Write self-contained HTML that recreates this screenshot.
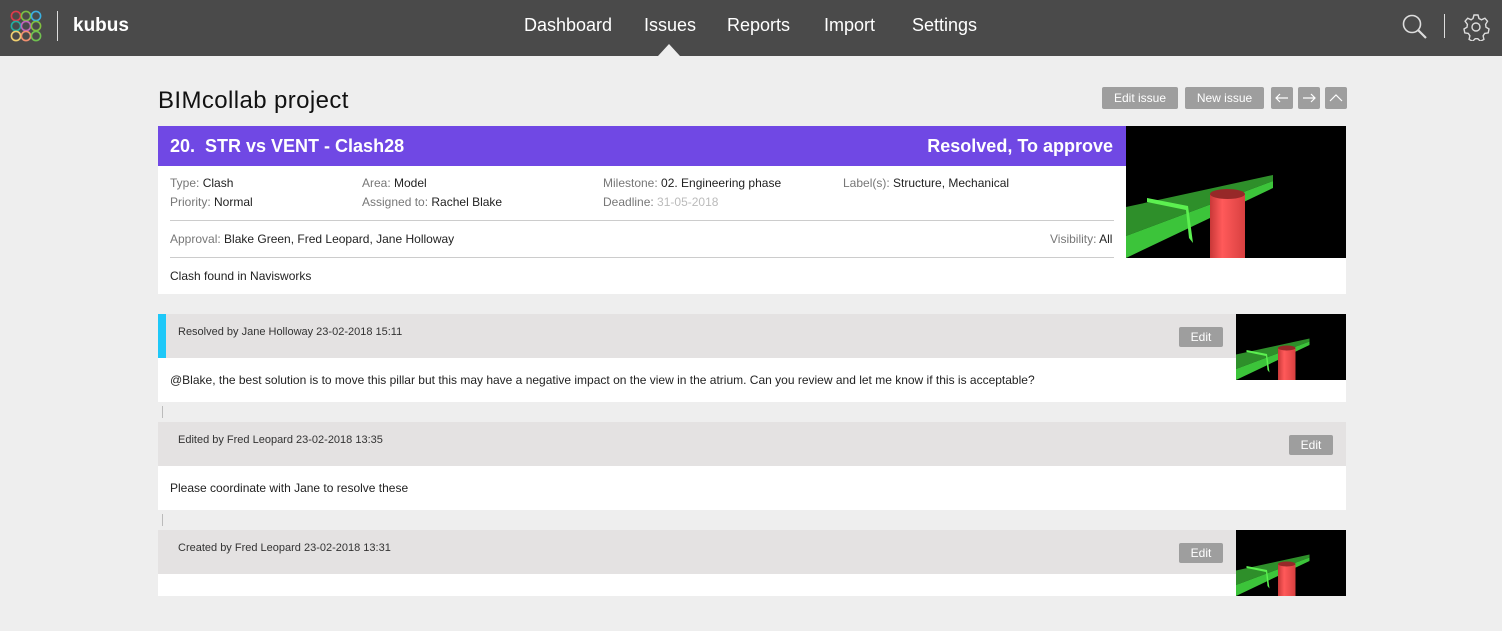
<!DOCTYPE html>
<html><head><meta charset="utf-8"><style>
*{margin:0;padding:0;box-sizing:border-box}
body{width:1502px;height:631px;background:#eeeeee;font-family:"Liberation Sans",Arial,sans-serif;position:relative;overflow:hidden;color:#222}
.a{position:absolute}
.nav{left:0;top:0;width:1502px;height:56px;background:#4a4a4a}
.ni{top:15px;color:#fff;font-size:18px;white-space:nowrap}
.btn{background:#9e9e9e;color:#fff;font-size:12px;text-align:center;line-height:22px;border-radius:2px;height:22px}
.lab{color:#777;font-size:12px;white-space:nowrap}
.lab b{font-weight:normal;color:#222}
.hr{height:1px;background:#ccc}
.ch{background:#e4e2e2}
.cb{background:#fff}
.ct{font-size:11px;color:#333}
.ctx{font-size:12px;color:#222}
</style></head><body>
<div class="a nav"></div>
<svg class="a" style="left:10px;top:10px" width="34" height="34" viewBox="0 0 34 34" fill="none" stroke-width="1.6">
<circle cx="6" cy="6" r="4.6" stroke="#e03a4a"/><circle cx="16" cy="6" r="4.6" stroke="#7ac043"/><circle cx="26" cy="6" r="4.6" stroke="#3ab0e0"/>
<circle cx="6" cy="16" r="4.6" stroke="#20b0a0"/><circle cx="16" cy="16" r="4.6" stroke="#c060c0"/><circle cx="26" cy="16" r="4.6" stroke="#80c040"/>
<circle cx="6" cy="26" r="4.6" stroke="#f0d070"/><circle cx="16" cy="26" r="4.6" stroke="#f09070"/><circle cx="26" cy="26" r="4.6" stroke="#70c050"/>
</svg>
<div class="a" style="left:57px;top:11px;width:1px;height:30px;background:#ddd"></div>
<div class="a" style="left:73px;top:15px;color:#fff;font-size:19px;font-weight:bold">kubus</div>
<div class="a ni" style="left:524px">Dashboard</div>
<div class="a ni" style="left:644px">Issues</div>
<div class="a ni" style="left:727px">Reports</div>
<div class="a ni" style="left:824px">Import</div>
<div class="a ni" style="left:912px">Settings</div>
<div class="a" style="left:658px;top:44px;width:0;height:0;border-left:11px solid transparent;border-right:11px solid transparent;border-bottom:12px solid #eeeeee"></div>
<svg class="a" style="left:1400px;top:12px" width="30" height="30" viewBox="0 0 30 30" fill="none" stroke="#ddd" stroke-width="1.6"><circle cx="12" cy="12" r="8.5"/><path d="M18 18l8 8" stroke-width="2.2"/></svg>
<div class="a" style="left:1444px;top:14px;width:1px;height:24px;background:#ddd"></div>
<svg class="a" style="left:1462px;top:13px" width="28" height="28" viewBox="0 0 28 28" fill="none" stroke="#ddd" stroke-width="1.4"><path d="M12 2h4l1 3.5 2.5 1.3 3.4-1.6 2.6 3-1.9 3.2.4 2.8 3 1.8-.8 3.9-3.5.5-1.6 2.4.8 3.6-3.5 1.8-2.6-2.5h-2.6l-2.6 2.5-3.5-1.8.8-3.6-1.6-2.4-3.5-.5-.8-3.9 3-1.8.4-2.8L3.1 8.2l2.6-3 3.4 1.6L11 5.5z"/><circle cx="14" cy="14" r="4"/></svg>

<div class="a" style="left:158px;top:87px;font-size:24px;color:#111;letter-spacing:0.4px">BIMcollab project</div>
<div class="a btn" style="left:1102px;top:87px;width:76px">Edit issue</div>
<div class="a btn" style="left:1185px;top:87px;width:79px">New issue</div>
<svg class="a" style="left:1271px;top:87px;background:#9e9e9e;border-radius:2px" width="22" height="22" viewBox="0 0 22 22" fill="none" stroke="#fff" stroke-width="1.2"><path d="M5 11h12M9 7l-4 4 4 4"/></svg>
<svg class="a" style="left:1298px;top:87px;background:#9e9e9e;border-radius:2px" width="22" height="22" viewBox="0 0 22 22" fill="none" stroke="#fff" stroke-width="1.2"><path d="M5 11h12M13 7l4 4-4 4"/></svg>
<svg class="a" style="left:1325px;top:87px;background:#9e9e9e;border-radius:2px" width="22" height="22" viewBox="0 0 22 22" fill="none" stroke="#fff" stroke-width="1.2"><path d="M5 14l6-6 6 6"/></svg>

<div class="a" style="left:158px;top:126px;width:968px;height:40px;background:#7048e4"></div>
<div class="a" style="left:170px;top:136px;color:#fff;font-size:18px;font-weight:bold">20.&nbsp; STR vs VENT - Clash28</div>
<div class="a" style="right:389px;top:136px;color:#fff;font-size:18px;font-weight:bold">Resolved, To approve</div>
<div class="a" style="left:158px;top:166px;width:968px;height:128px;background:#fff"></div>
<div class="a" style="left:1126px;top:258px;width:220px;height:36px;background:#fff"></div>
<div class="a lab" style="left:170px;top:176px">Type: <b>Clash</b></div>
<div class="a lab" style="left:170px;top:195px">Priority: <b>Normal</b></div>
<div class="a lab" style="left:362px;top:176px">Area: <b>Model</b></div>
<div class="a lab" style="left:362px;top:195px">Assigned to: <b>Rachel Blake</b></div>
<div class="a lab" style="left:603px;top:176px">Milestone: <b>02. Engineering phase</b></div>
<div class="a lab" style="left:603px;top:195px">Deadline: <span style="color:#bbb">31-05-2018</span></div>
<div class="a lab" style="left:843px;top:176px">Label(s): <b>Structure, Mechanical</b></div>
<div class="a hr" style="left:170px;top:220px;width:944px"></div>
<div class="a lab" style="left:170px;top:232px">Approval: <b>Blake Green, Fred Leopard, Jane Holloway</b></div>
<div class="a lab" style="left:1050px;top:232px">Visibility: <b>All</b></div>
<div class="a hr" style="left:170px;top:257px;width:944px"></div>
<div class="a lab" style="left:170px;top:269px;color:#222">Clash found in Navisworks</div>

<svg width="0" height="0" style="position:absolute"><defs>
<linearGradient id="pg" x1="0" x2="1"><stop offset="0" stop-color="#c83838"/><stop offset=".35" stop-color="#ff5a5a"/><stop offset="1" stop-color="#d84040"/></linearGradient>
<g id="scene"><rect width="220" height="132" fill="#000"/>
<polygon points="0,81 147,49 147,55 0,110" fill="#2e8f2a"/>
<polygon points="0,110 147,55 147,62 0,132" fill="#3cc43a"/>
<polygon points="21,72 62,80 67,117 63,112 60,84 21,76" fill="#5cf050"/>
<rect x="84" y="68" width="35" height="64" fill="url(#pg)"/>
<ellipse cx="101.5" cy="68" rx="17.5" ry="5" fill="#962828"/>
</g></defs></svg>
<svg class="a" style="left:1126px;top:126px" width="220" height="132" viewBox="0 0 220 132"><use href="#scene"/></svg>

<div class="a ch" style="left:158px;top:314px;width:1078px;height:44px"></div>
<div class="a" style="left:158px;top:314px;width:8px;height:44px;background:#1ec8f8"></div>
<div class="a ct" style="left:178px;top:326px">Resolved by Jane Holloway 23-02-2018 15:11</div>
<div class="a btn" style="left:1179px;top:327px;width:44px;height:20px;line-height:20px">Edit</div>
<svg class="a" style="left:1236px;top:314px" width="110" height="66" viewBox="0 0 220 132"><use href="#scene"/></svg>
<div class="a cb" style="left:158px;top:358px;width:1078px;height:44px"></div>
<div class="a cb" style="left:1236px;top:380px;width:110px;height:22px"></div>
<div class="a ctx" style="left:170px;top:373px">@Blake, the best solution is to move this pillar but this may have a negative impact on the view in the atrium. Can you review and let me know if this is acceptable?</div>
<div class="a" style="left:162px;top:406px;width:1px;height:12px;background:#bbb"></div>
<div class="a ch" style="left:158px;top:422px;width:1188px;height:44px"></div>
<div class="a ct" style="left:178px;top:434px">Edited by Fred Leopard 23-02-2018 13:35</div>
<div class="a btn" style="left:1289px;top:435px;width:44px;height:20px;line-height:20px">Edit</div>
<div class="a cb" style="left:158px;top:466px;width:1188px;height:44px"></div>
<div class="a ctx" style="left:170px;top:481px">Please coordinate with Jane to resolve these</div>
<div class="a" style="left:162px;top:514px;width:1px;height:12px;background:#bbb"></div>
<div class="a ch" style="left:158px;top:530px;width:1078px;height:44px"></div>
<div class="a ct" style="left:178px;top:542px">Created by Fred Leopard 23-02-2018 13:31</div>
<div class="a btn" style="left:1179px;top:543px;width:44px;height:20px;line-height:20px">Edit</div>
<svg class="a" style="left:1236px;top:530px" width="110" height="66" viewBox="0 0 220 132"><use href="#scene"/></svg>
<div class="a cb" style="left:158px;top:574px;width:1078px;height:22px"></div>
</body></html>
